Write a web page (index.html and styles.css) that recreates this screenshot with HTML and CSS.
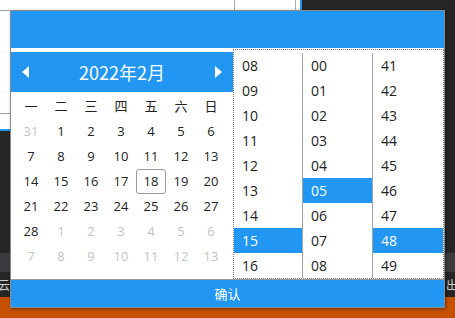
FILE: index.html
```html
<!DOCTYPE html>
<html lang="zh">
<head>
<meta charset="utf-8">
<link rel="stylesheet" href="styles.css">
</head>
<body>
<div class="backdrop">
  <div class="bg-upper">
    <div class="bg-doc">
      <div class="bg-tabs"><span class="tab-a"></span><span class="tab-b"></span><span class="tab-c"></span></div>
      <div class="bg-sheet"></div>
      <div class="bg-strip"></div>
    </div>
    <div class="bg-side"></div>
  </div>
  <div class="bg-band"></div>
  <div class="bg-status"><span class="st-left">云</span><span class="st-right">出</span></div>
  <div class="bg-orange"></div>
</div>

<div class="dialog">
  <div class="dlg-title"></div>
  <div class="dlg-body">
    <div class="calendar">
      <div class="cal-head">
        <span class="arrow arrow-left"></span>
        <span class="cal-month">2022年2月</span>
        <span class="arrow arrow-right"></span>
      </div>
      <div class="cal-weekdays">
        <span>一</span><span>二</span><span>三</span><span>四</span><span>五</span><span>六</span><span>日</span>
      </div>
      <div class="cal-days">
        <span class="other">31</span><span>1</span><span>2</span><span>3</span><span>4</span><span>5</span><span>6</span>
        <span>7</span><span>8</span><span>9</span><span>10</span><span>11</span><span>12</span><span>13</span>
        <span>14</span><span>15</span><span>16</span><span>17</span><span class="today">18</span><span>19</span><span>20</span>
        <span>21</span><span>22</span><span>23</span><span>24</span><span>25</span><span>26</span><span>27</span>
        <span>28</span><span class="other">1</span><span class="other">2</span><span class="other">3</span><span class="other">4</span><span class="other">5</span><span class="other">6</span>
        <span class="other">7</span><span class="other">8</span><span class="other">9</span><span class="other">10</span><span class="other">11</span><span class="other">12</span><span class="other">13</span>
      </div>
    </div>
    <div class="time">
      <div class="time-cols">
        <div class="tcol tcol-h">
          <div class="ti">08</div><div class="ti">09</div><div class="ti">10</div><div class="ti">11</div><div class="ti">12</div><div class="ti">13</div><div class="ti">14</div><div class="ti sel">15</div><div class="ti">16</div>
        </div>
        <div class="tcol tcol-m">
          <div class="ti">00</div><div class="ti">01</div><div class="ti">02</div><div class="ti">03</div><div class="ti">04</div><div class="ti sel">05</div><div class="ti">06</div><div class="ti">07</div><div class="ti">08</div>
        </div>
        <div class="tcol tcol-s">
          <div class="ti">41</div><div class="ti">42</div><div class="ti">43</div><div class="ti">44</div><div class="ti">45</div><div class="ti">46</div><div class="ti">47</div><div class="ti sel">48</div><div class="ti">49</div>
        </div>
      </div>
    </div>
  </div>
  <div class="dlg-footer">确认</div>
</div>
</body>
</html>
```

FILE: styles.css
```css
* { box-sizing: border-box; }
html, body {
  margin: 0;
  padding: 0;
  width: 455px;
  height: 318px;
  overflow: hidden;
  background: #262626;
  font-family: "Open Sans", "Noto Sans CJK SC", sans-serif;
}

/* ---------- backdrop application ---------- */
.backdrop {
  width: 455px;
  height: 318px;
  display: flex;
  flex-direction: column;
}
.bg-upper {
  height: 253px;
  display: flex;
}
.bg-doc {
  width: 300px;
  display: flex;
  flex-direction: column;
}
.bg-tabs {
  height: 11px;
  background: #fff;
  border-bottom: 1px solid #a0a0a0;
  display: flex;
}
.tab-a { width: 235px; border-right: 1px solid #a8a8a8; }
.tab-b { width: 61px; border-right: 1px solid #a8a8a8; }
.tab-c { flex: 1; }
.bg-sheet {
  height: 103px;
  background: #fff;
  border-bottom: 1px solid #a0a0a0;
}
.bg-strip {
  height: 17px;
  background: #fff;
  border-bottom: 2px solid #2196f3;
}
.bg-side {
  flex: 1;
  border-left: 2px solid #2196f3;
  background: #262626;
  border-right: 0;
}
.bg-band {
  height: 19px;
  background: #3c3c3e;
}
.bg-status {
  height: 25px;
  background: #262626;
  display: flex;
  justify-content: space-between;
  align-items: center;
  font-size: 12px;
  color: #cfcfcf;
  font-family: "Noto Sans CJK SC", sans-serif;
}
.st-left { margin-left: -2px; }
.st-right { margin-right: -3px; }
.bg-orange {
  flex: 1;
  background: #c65102;
}

/* ---------- dialog ---------- */
.dialog {
  position: absolute;
  left: 10px;
  top: 10px;
  width: 435px;
  height: 298px;
  border: 1px solid #8a8a8a;
  background: #fff;
  display: flex;
  flex-direction: column;
  box-shadow: 1px 1px 3px rgba(0,0,0,0.45);
}
.dlg-title {
  height: 37px;
  background: #2196f3;
  flex: none;
}
.dlg-body {
  height: 230px;
  margin-top: 1px;
  display: flex;
  flex: none;
}
.dlg-footer {
  flex: 1;
  background: #2196f3;
  border-top: 1px solid #9a9a9a;
  color: #fff;
  font-size: 13px;
  font-family: "Noto Sans CJK SC", sans-serif;
  display: flex;
  align-items: center;
  justify-content: center;
}

/* ---------- calendar ---------- */
.calendar {
  width: 222px;
  padding-top: 3px;
  display: flex;
  flex-direction: column;
}
.cal-head {
  height: 40px;
  background: #2196f3;
  display: flex;
  align-items: center;
  justify-content: space-between;
  padding: 0 11px 0 11px;
  color: #fff;
}
.cal-month {
  font-size: 18px;
  font-family: "Noto Sans CJK SC", sans-serif;
  line-height: 1;
}
.arrow {
  width: 0;
  height: 0;
  border-top: 6px solid transparent;
  border-bottom: 6px solid transparent;
}
.arrow-left { border-right: 7px solid #fff; }
.arrow-right { border-left: 7px solid #fff; }

.cal-weekdays {
  height: 26px;
  display: grid;
  grid-template-columns: repeat(7, 30px);
  padding-left: 5px;
  align-items: center;
  font-size: 13px;
  color: #222;
  font-family: "Noto Sans CJK SC", sans-serif;
}
.cal-weekdays span, .cal-days span {
  text-align: center;
}
.cal-days {
  margin-top: 1px;
  display: grid;
  grid-template-columns: repeat(7, 30px);
  grid-auto-rows: 25px;
  padding-left: 5px;
  font-size: 13px;
  color: #222;
}
.cal-days span {
  line-height: 25px;
}
.cal-days .other { color: #c4c4c4; }
.cal-days .today {
  border: 1px solid #9a9a9a;
  border-radius: 3px;
  line-height: 23px;
}

/* ---------- time picker ---------- */
.time {
  flex: 1;
  border: 1px dotted #808080;
  overflow: hidden;
}
.time-cols {
  margin-top: 3px;
  display: flex;
  height: 100%;
}
.tcol {
  overflow: hidden;
}
.tcol-h { width: 69px; border-right: 1px solid #a4a4a4; }
.tcol-m { width: 70px; border-right: 1px solid #a4a4a4; }
.tcol-s { flex: 1; }
.ti {
  height: 25px;
  line-height: 25px;
  padding-left: 8px;
  font-size: 14px;
  color: #222;
}
.ti.sel {
  background: #2196f3;
  color: #fff;
}
```
